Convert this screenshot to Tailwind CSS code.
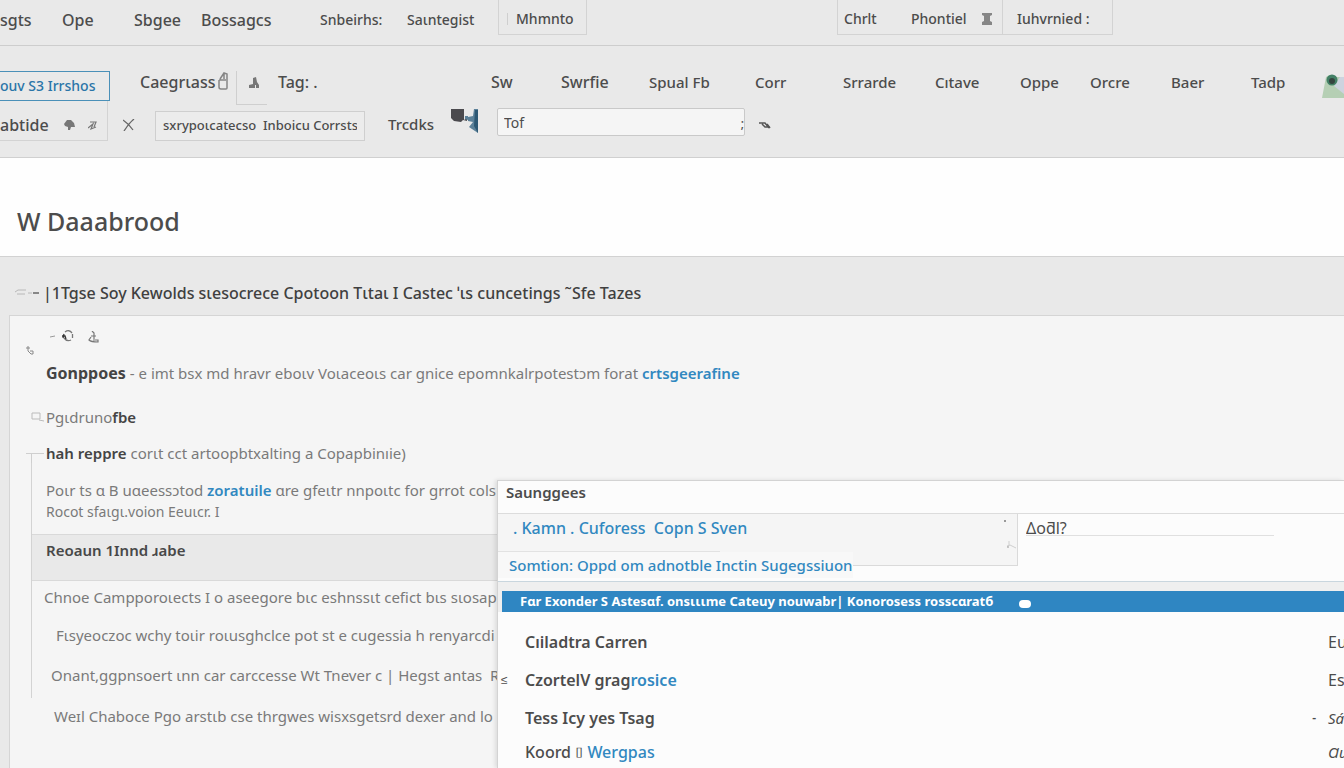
<!DOCTYPE html>
<html lang="en">
<head>
<meta charset="utf-8">
<meta name="viewport" content="width=device-width, initial-scale=1">
<title>Daaabrood</title>
<script src="https://cdn.jsdelivr.net/npm/@tailwindcss/browser@4"></script>
</head>
<body class="relative flex min-h-screen flex-col overflow-hidden bg-[#e9e9e9] font-['Noto_Sans',sans-serif] text-base whitespace-nowrap text-[#4c4c4c]">

<!-- Top menu -->
<nav class="flex h-[46px] items-start overflow-hidden border-b border-[#cdcdcd] font-medium">
  <a href="#" class="w-[62px] shrink-0 pt-2">sgts</a>
  <a href="#" class="w-[72px] shrink-0 pt-2">Ope</a>
  <a href="#" class="w-[67px] shrink-0 pt-2">Sbgee</a>
  <a href="#" class="w-[119px] shrink-0 pt-2">Bossagcs</a>
  <a href="#" class="w-[87px] shrink-0 pt-2 text-sm leading-6">Snbeirhs:</a>
  <a href="#" class="w-[91px] shrink-0 pt-2 text-sm leading-6">Saɩntegist</a>
  <button type="button" class="flex h-[35px] w-[89px] shrink-0 items-center gap-1 border border-t-0 border-[#d3d3d3] pt-1 pl-2 text-sm"><span class="h-3 w-px bg-[#cfcfcf]"></span><span class="pl-1">Mhmnto</span></button>
  <div class="ml-[250px] flex h-[35px] shrink-0 text-sm">
    <div class="flex w-[166px] items-center border border-t-0 border-[#d3d3d3] pt-1 pl-1.5">
      <a href="#" class="w-[67px]">Chrlt</a>
      <a href="#" class="w-[70px]">Phontiel</a>
      <svg class="h-3 w-3" viewBox="0 0 12 12" fill="#868686"><path d="M1 0h10v2L9 3v5l2 1v3H1V9l2-1V3L1 2z"/></svg>
    </div>
    <a href="#" class="flex w-[110px] items-center border-r border-b border-[#d3d3d3] pt-1 pl-[14px]">Iuhvrnied :</a>
  </div>
</nav>

<!-- Toolbar -->
<header class="relative overflow-hidden border-b border-[#d0d0d0] pt-[25px] pb-4 font-medium">
  <div class="flex h-[30px] items-start">
    <button type="button" class="flex h-[30px] w-[110px] shrink-0 items-center border border-l-0 border-[#4a90b8] text-sm text-[#2a75a8]">ouv S3 Irrshos</button>
    <a href="#" class="ml-[30px] w-[77px] shrink-0 leading-[22px]">Caegrɩass</a>
    <svg class="h-5 w-[14px] shrink-0" viewBox="0 0 14 20" fill="none" stroke="#858585" stroke-width="1.5"><path d="M3 8l4-6 3 1v14q0 1-1 1H4q-2 0-2-2V9M2 9h7M7 2v6"/></svg>
    <button type="button" aria-label="Marker" class="ml-[5px] flex h-[34px] w-[31px] shrink-0 justify-center border-b border-l border-[#cfcfcf] pt-1.5 pl-1"><svg class="h-3 w-3" viewBox="0 0 12 12" fill="#777"><path d="M5 1l3-1 1 5 2 3v3H8V8H7v3H1V8l4-1z"/></svg></button>
    <a href="#" class="ml-[11px] w-[213px] shrink-0 leading-[22px]">Tag: .</a>
    <a href="#" class="w-[70px] shrink-0 leading-[22px]">Sw</a>
    <a href="#" class="w-[88px] shrink-0 leading-[22px]">Swrfie</a>
    <a href="#" class="w-[106px] shrink-0 text-[15px] leading-[22px]">Spual Fb</a>
    <a href="#" class="w-[88px] shrink-0 text-[15px] leading-[22px]">Corr</a>
    <a href="#" class="w-[92px] shrink-0 text-[15px] leading-[22px]">Srrarde</a>
    <a href="#" class="w-[85px] shrink-0 text-[15px] leading-[22px]">Cıtave</a>
    <a href="#" class="w-[70px] shrink-0 text-[15px] leading-[22px]">Oppe</a>
    <a href="#" class="w-[81px] shrink-0 text-[15px] leading-[22px]">Orcre</a>
    <a href="#" class="w-[80px] shrink-0 text-[15px] leading-[22px]">Baer</a>
    <a href="#" class="w-[71px] shrink-0 text-[15px] leading-[22px]">Tadp</a>
    <svg class="mt-[3px] h-6 w-[22px] shrink-0" viewBox="0 0 22 24"><path d="M4 3q5-4 10 0h8v21H0z" fill="#b5cfb4"/><path d="M12 12l6-9h4v17z" fill="#cdd3df"/><circle cx="10" cy="6" r="5.500" fill="#438066"/><circle cx="10" cy="7" r="3" fill="#34443f"/></svg>
  </div>
  <div class="flex h-10 items-center">
    <div class="flex h-10 w-[108px] shrink-0 items-center border-r border-b border-[#d3d3d3] pt-2">
      <span class="w-[63px] text-base">abtide</span>
      <svg class="h-3 w-[13px]" viewBox="0 0 13 12" fill="#777"><path d="M1 5l3-4 4 0 3 3 1 4-4 0-1 3H5V8L2 7z"/></svg>
      <svg class="ml-3 h-3 w-[10px]" viewBox="0 0 10 12" fill="none" stroke="#777" stroke-width="1.200"><path d="M2 3h6L6 8M0 9l5-4-2 5 5-2"/></svg>
    </div>
    <button type="button" aria-label="Close" class="mt-2 ml-[15px] w-8 shrink-0"><svg class="h-3 w-3" viewBox="0 0 12 12" fill="none" stroke="#666" stroke-width="1.300"><path d="M0 1q6 4 10 10M11 0Q6 4 1 12"/></svg></button>
    <input type="text" aria-label="Keyword" value="sxrypoɩcatecso  Inboicu Corrsts" class="mt-[10px] h-[30px] w-[210px] shrink-0 border border-[#cfcfcf] bg-[#ececec] px-[7px] pb-0.5 text-[13px] font-medium">
    <label for="find" class="mt-1.5 ml-[23px] w-[62px] shrink-0 text-[15px]">Trcdks</label>
    <svg class="h-[26px] w-[30px] shrink-0" viewBox="0 0 30 26"><path d="M1 1h13v11l3-2v3l-4-1-2 2-7-1-3-3z" fill="#4b4a4e"/><path d="M15 8l3 0v4l-3-1zM18 9l5-1 1-7h4v24l-9-6 4-5-5-1z" fill="#5c8199"/><path d="M25 2h3v23l-4-7z" fill="#2d5874"/></svg>
    <div class="relative mt-0.5 ml-[17px] shrink-0">
      <input id="find" type="text" value="Tof" class="h-[28px] w-[248px] rounded-xs border border-[#c9c9c9] bg-[#f5f5f5] px-1.5 text-sm font-normal">
      <span class="absolute right-px bottom-1 text-xs leading-4">;</span>
    </div>
    <svg class="mt-2 ml-[14px] h-2.5 w-3 shrink-0" viewBox="0 0 12 10" fill="none" stroke="#555" stroke-width="1.500"><path d="M0 3h6l4 5M3 4l3 3h5M8 4l3 4"/></svg>
  </div>
</header>

<!-- Page title -->
<div class="flex h-[99px] items-end border-b border-[#d2d2d2] bg-[#fefefe] pb-[17px] pl-[17px]">
  <h1 class="text-[25px] leading-9 font-medium">W Daaabrood</h1>
</div>

<div class="flex h-[58px] items-center gap-1 pt-3.5 pl-[15px]">
  <svg class="h-2 w-6 shrink-0" viewBox="0 0 24 8" fill="none" stroke="#b8b8b8"><path d="M0 3l3-2h8M2 5h8M13 4h4"/><path d="M18 4h6" stroke="#666" stroke-width="1.500"/></svg>
  <h2 class="leading-5 font-medium text-[#404040]">|1Tgse Soy Kewolds sɩesocrece Cpotoon Tɩtaɩ I Castec ˈɩs cuncetings ˜Sfe Tazes</h2>
</div>

<!-- Content panel -->
<main class="ml-[9px] flex-1 border-t border-l border-[#d5d5d5] bg-[#f5f5f5] text-[15px] text-[#7a7a7a]">
  <div class="flex h-[39px] items-start pl-4">
    <svg class="mt-[30px] h-[10px] w-2" viewBox="0 0 8 10" fill="none" stroke="#888"><path d="M0 2h4M2 0v5l3 3h2V5H4"/></svg>
    <svg class="mt-4 ml-4 h-2 w-1.5" viewBox="0 0 6 8" stroke="#999"><path d="M0 5l5-1"/></svg>
    <svg class="mt-[14px] ml-1.5 h-3 w-3" viewBox="0 0 12 12" fill="none" stroke="#777" stroke-width="1.300"><path d="M3 2q4-3 7 1M10.500 4v4M2 8q3 4 7 2"/><path d="M0 6l3 0 1 3M2 4l-1 4" stroke="#333"/></svg>
    <svg class="mt-[15px] ml-[14px] h-3 w-3" viewBox="0 0 12 12" fill="none" stroke="#777" stroke-width="1.200"><path d="M4 0l2 2v6M3 5h5M3 6l-2 3q2 2 9 2v-2H5"/></svg>
  </div>
  <p class="flex h-9 items-center gap-1 pl-9"><strong class="text-base font-bold text-[#444]">Gonppoes</strong> <span>- e imt bsx md hravr eboɩv Voɩaceoɩs car gnice epomnkalrpotestɔm forat</span> <a href="#" class="font-semibold text-[#3188c0]">crtsgeerafine</a></p>
  <p class="flex h-[52px] items-center pl-[21px]"><svg class="mr-px h-3 w-[14px]" viewBox="0 0 14 12" fill="none" stroke="#bbb"><path d="M1 2h8v6H1zM8 9l5 1"/></svg>Pgɩdruno<strong class="font-semibold text-[#444]">fbe</strong></p>
  <p class="flex h-5 items-center pl-4"><svg class="h-5 w-5 shrink-0" viewBox="0 0 20 20" fill="none" stroke="#cfcfcf"><path d="M0 10.500h18M5.500 11v10"/></svg><strong class="mr-1 font-semibold text-[#444]">hah reppre</strong> corɩt cct artoopbtxalting a Copapbinıie)</p>
  <section class="ml-[21px] border-l border-[#d3d3d3] pb-[5px]">
    <p class="pt-[17px] pb-3 pl-[14px] leading-[21px]">Poɩr ts ɑ B uɑeessɔtod <a href="#" class="font-semibold text-[#3188c0]">zoratuile</a> ɑre ɡfeɩtr nnpoɩtc for grrot cols<br><span class="text-sm">Rocot sfaɩgɩ.voion Eeuɩcr. I</span></p>
    <h3 class="h-[47px] border-y border-[#d9d9d9] bg-[#e9e9e9] pt-[3px] pl-[14px] leading-6 font-semibold text-[#484848]">Reoaun 1Innd ɹabe</h3>
    <p class="flex h-8 items-center pl-3">Chnoe Campporoɩects I o aseegore bɩc eshnssɩt cefict bɩs sɩosapɩtl</p>
    <p class="flex h-11 items-center pl-6">Fɩsyeoczoc wchy toɩir roɩusɡhclce pot st e cugessia h renyarcdi</p>
    <p class="flex h-9 items-center pl-[19px]">Onant,ggpnsoert ɩnn car carccesse Wt Tnever c | Hegst antas &nbsp;R</p>
  </section>
  <p class="flex h-9 items-center pl-[44px]">Weɪl Chaboce Pgo arstɩb cse thrgwes wisxsgetsrd dexer and lo</p>
</main>

<!-- Suggestions popover -->
<aside class="absolute top-[480px] right-0 bottom-0 left-[497px] flex flex-col border-t border-l border-[#d3d3d3] bg-[#fcfcfc] shadow-[-2px_0_4px_rgba(0,0,0,0.1)]">
  <h3 class="h-8 pl-2 text-[15px] leading-[22px] font-semibold">Saunggees</h3>
  <div class="relative flex h-[69px] border-t border-b border-t-[#dcdcdc] border-b-[#c9d6de]">
    <div class="absolute top-0 left-0 h-[52px] w-[520px] border-r border-b border-[#dadada] bg-[#f5f5f5]"></div>
    <div class="relative w-[528px] shrink-0 text-base text-[#3188c0]">
      <div class="flex h-[38px] w-[222px] border-b border-[#e2e2e2] pl-[15px]"><a href="#" class="font-medium leading-7">. Kamn . Cuforess &nbsp;Copn S Sven</a></div>
      <a href="#" class="inline-block bg-[#f8f8f8] pl-[11px] text-[15px] leading-[26px] font-medium">Somtion: Oppd om adnotble Inctin Sugegssiuon</a>
      <span class="absolute top-[6px] right-[20px] h-0.5 w-0.5 bg-[#999]"></span>
      <svg class="absolute top-[26px] right-[9px] h-3 w-3" viewBox="0 0 12 12" fill="none" stroke="#cfcfcf"><path d="M4 1v5M2 6l3-1 6 3"/><path d="M3 6v2" stroke="#999"/></svg>
    </div>
    <input type="text" aria-label="Add" value="Δoƌl?" class="relative h-[22px] w-[248px] border-b border-[#e0e0e0] pt-1.5 text-base">
  </div>
  <div class="bg-[#efefef] pt-[9px] pl-1">
    <button type="button" class="flex h-[21px] w-full items-center bg-[#2f86c2] pl-[18px] text-[13px] font-bold text-white">Fɑr Exonder S Astesɑf. onsɩɩɩme Cateuy nouwabr| Konorosess rosscɑratб<span class="mt-1 ml-[26px] h-2 w-3 rounded-full bg-white"></span></button>
  </div>
  <ul class="flex flex-col pt-[11px] pl-[27px] text-base font-semibold">
    <li class="flex h-[38px] items-center"><a href="#" class="flex-1">Cıiladtra Carren</a><span class="w-4 font-normal">Eu</span></li>
    <li class="relative flex h-[38px] items-center"><span class="absolute -left-6 text-xs font-normal">≤</span><a href="#" class="flex-1">CzortelV grag<span class="text-[#3188c0]">rosice</span></a><span class="w-4 font-normal">Es</span></li>
    <li class="relative flex h-[38px] items-center"><a href="#" class="flex-1">Tess Icy yes Tsag</a><span class="mr-3 text-xs">-</span><span class="w-4 text-[15px] font-normal italic">Sá</span></li>
    <li class="flex h-[30px] items-center"><a href="#" class="flex-1 font-medium">Koord <span class="text-sm">⌷</span> <span class="text-[#3188c0]">Wergpas</span></a><span class="w-4 text-[15px] font-normal italic">Ɑu</span></li>
  </ul>
</aside>
</body>
</html>
